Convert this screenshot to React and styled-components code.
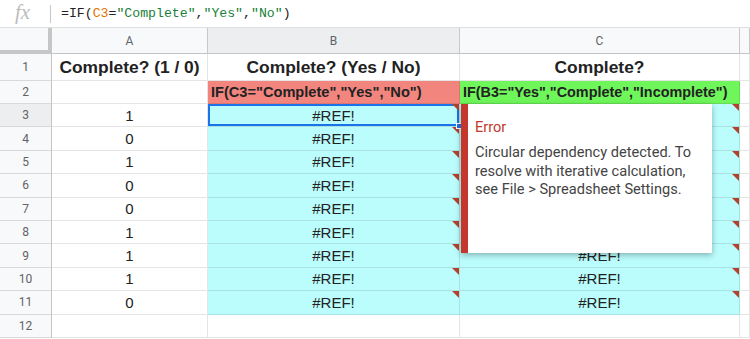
import React from 'react'
import styled, { createGlobalStyle } from 'styled-components'

const GlobalStyle = createGlobalStyle`
   html, body {
      margin: 0;
      padding: 0;
      background: #fff;
   }
   * {
      box-sizing: border-box;
   }
`

// c: false when the popup covers the C cell entirely
const rows = [
   { n: 3, a: '1', c: false },
   { n: 4, a: '0', c: false },
   { n: 5, a: '1', c: false },
   { n: 6, a: '0', c: false },
   { n: 7, a: '0', c: false },
   { n: 8, a: '1', c: false },
   { n: 9, a: '1', c: true },
   { n: 10, a: '1', c: true },
   { n: 11, a: '0', c: true },
]

const CYAN = '#bbfcfc'

const App = () => {
   return (
      <Page>
         <GlobalStyle />
         <FormulaBar>
            <Fx>fx</Fx>
            <Divider />
            <Formula>
               =IF(<Tok $c='#e37400'>C3</Tok>=<Tok $c='#188038'>"Complete"</Tok>,
               <Tok $c='#188038'>"Yes"</Tok>,<Tok $c='#188038'>"No"</Tok>)
            </Formula>
         </FormulaBar>
         <Sheet>
            <Corner />
            <ColHead>A</ColHead>
            <ColHead $active>B</ColHead>
            <ColHead>C</ColHead>
            <ColHead />

            <RowHead>1</RowHead>
            <Cell $bold $size={17.4}>Complete? (1 / 0)</Cell>
            <Cell $bold $size={17.4}>Complete? (Yes / No)</Cell>
            <Cell $bold $size={17.4}>Complete?</Cell>
            <Cell />

            <RowHead>2</RowHead>
            <Cell />
            <Cell $bold $size={14.6} $align='left' $bg='#f3857f'>
               IF(C3="Complete","Yes","No")
            </Cell>
            <Cell $bold $size={14.4} $align='left' $bg='#6ff65b'>
               IF(B3="Yes","Complete","Incomplete")
            </Cell>
            <Cell />

            {rows.map((r) => (
               <React.Fragment key={r.n}>
                  <RowHead $active={r.n === 3}>{r.n}</RowHead>
                  <Cell>{r.a}</Cell>
                  <Cell $bg={CYAN} $flag $selected={r.n === 3}>
                     #REF!
                     {r.n === 3 && <Handle />}
                  </Cell>
                  <Cell $bg={CYAN} $flag>{r.c ? '#REF!' : null}</Cell>
                  <Cell />
               </React.Fragment>
            ))}

            <RowHead>12</RowHead>
            <Cell />
            <Cell />
            <Cell />
            <Cell />

            <Popup>
               <PopupTitle>Error</PopupTitle>
               <PopupBody>
                  Circular dependency detected. To
                  <br />
                  resolve with iterative calculation,
                  <br />
                  see File &gt; Spreadsheet Settings.
               </PopupBody>
            </Popup>
         </Sheet>
      </Page>
   )
}

const Page = styled.div`
   width: 750px;
   height: 339px;
   overflow: hidden;
   background: #fff;
   font-family: 'Liberation Sans', Arial, sans-serif;
`

const FormulaBar = styled.div`
   height: 28px;
   display: flex;
   align-items: center;
   border-bottom: 1px solid #e0e0e0;
`

const Fx = styled.div`
   width: 50px;
   padding-left: 15px;
   font-family: 'Liberation Serif', 'DejaVu Serif', serif;
   font-style: italic;
   font-size: 21px;
   color: #bdbdbd;
   line-height: 1;
   margin-top: -3px;
`

const Divider = styled.div`
   width: 1px;
   height: 18px;
   background: #c8c8c8;
   margin-right: 10px;
`

const Formula = styled.div`
   font-family: 'Liberation Mono', 'DejaVu Sans Mono', monospace;
   font-size: 13.2px;
   color: #222;
   white-space: pre;
`

const Tok = styled.span`
   color: ${(p) => p.$c};
`

const Sheet = styled.div`
   position: relative;
   display: grid;
   grid-template-columns: 52px 156px 252px 280px 10px;
   grid-template-rows: 26px 27px 23px repeat(10, 23.4px);
`

const Corner = styled.div`
   background: #f8f9fa;
   border-right: 4px solid #c4c7c5;
   border-bottom: 4px solid #c4c7c5;
`

const ColHead = styled.div`
   display: flex;
   align-items: center;
   justify-content: center;
   background: ${(p) => (p.$active ? '#eceef0' : '#f8f9fa')};
   border-right: 1px solid #c8c8c8;
   border-bottom: 1px solid #c4c4c4;
   font-family: Roboto, 'Liberation Sans', sans-serif;
   font-size: 12px;
   color: #5f6368;
`

const RowHead = styled.div`
   display: flex;
   align-items: center;
   justify-content: center;
   background: ${(p) => (p.$active ? '#eceef0' : '#f8f9fa')};
   border-right: 1px solid #c4c4c4;
   border-bottom: 1px solid #d8d8d8;
   font-family: Roboto, 'Liberation Sans', sans-serif;
   font-size: 12px;
   color: #5f6368;
`

const Cell = styled.div`
   position: relative;
   display: flex;
   align-items: center;
   justify-content: ${(p) => (p.$align === 'left' ? 'flex-start' : 'center')};
   padding: 0 3px;
   background: ${(p) => p.$bg || '#fff'};
   border-right: 1px solid rgba(0, 0, 0, 0.1);
   border-bottom: 1px solid rgba(0, 0, 0, 0.1);
   font-size: ${(p) => p.$size || 15}px;
   font-weight: ${(p) => (p.$bold ? 700 : 400)};
   color: #222;
   white-space: nowrap;
   overflow: visible;
   box-shadow: ${(p) => (p.$selected ? 'inset 0 0 0 2px #1a73e8' : 'none')};

   &::after {
      content: '';
      display: ${(p) => (p.$flag ? 'block' : 'none')};
      position: absolute;
      top: 0;
      right: 0;
      border-top: 7px solid #b3412c;
      border-left: 7px solid transparent;
   }
`

const Handle = styled.span`
   position: absolute;
   right: -3px;
   bottom: -3px;
   width: 6px;
   height: 6px;
   background: #1a73e8;
   border: 1px solid #fff;
   z-index: 2;
`

const Popup = styled.div`
   position: absolute;
   left: 461px;
   top: 76px;
   width: 251px;
   height: 149px;
   background: #fff;
   border-left: 7px solid #c5372c;
   box-shadow: 0 2px 6px rgba(0, 0, 0, 0.3);
   padding: 15px 6px 0 7px;
   font-family: Roboto, 'Liberation Sans', sans-serif;
   z-index: 3;
`

const PopupTitle = styled.div`
   font-size: 14.5px;
   line-height: 18px;
   color: #c0392b;
   margin-bottom: 6px;
`

const PopupBody = styled.div`
   font-size: 14.6px;
   line-height: 18.5px;
   color: #444;
   white-space: nowrap;
`

export default App
